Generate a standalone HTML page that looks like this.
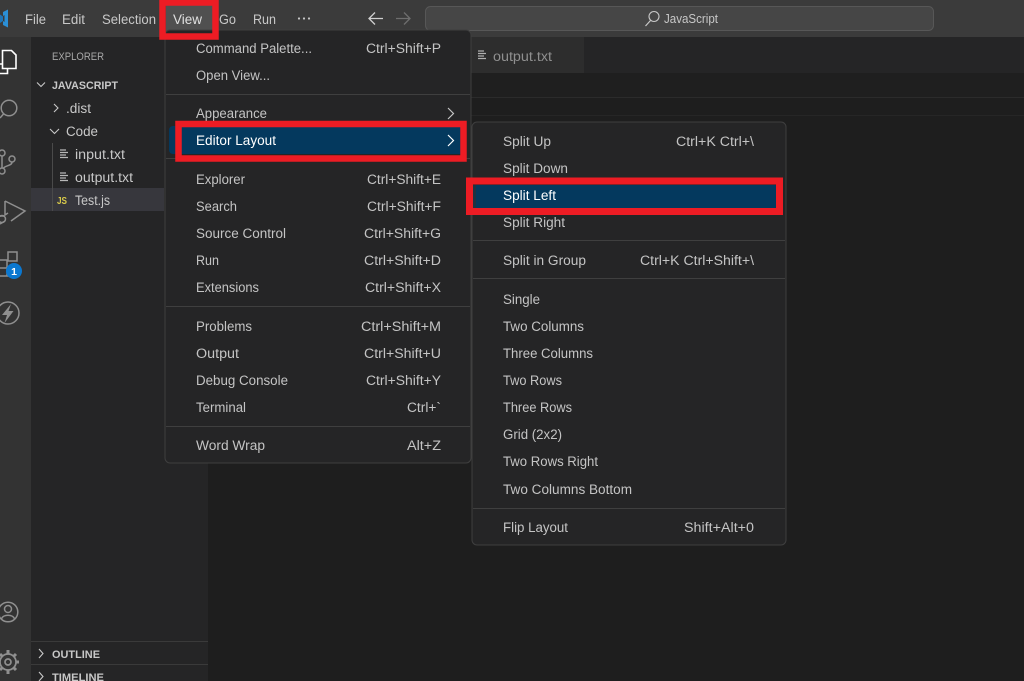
<!DOCTYPE html>
<html><head><meta charset="utf-8"><style>
html,body{margin:0;padding:0;background:#1e1e1e;overflow:hidden}
svg{display:block}
text{font-family:"Liberation Sans",sans-serif;font-size:13.5px;fill:#c8c8c8}
.m text{fill:#c4c4c4}
</style></head><body>
<svg width="1024" height="681" viewBox="0 0 1024 681" xmlns="http://www.w3.org/2000/svg">
<rect width="1024" height="681" fill="#1e1e1e"/>
<rect width="1024" height="37" fill="#3b3b3b"/>
<rect y="37" width="31" height="644" fill="#333333"/>
<rect x="31" y="37" width="177" height="644" fill="#252526"/>
<rect x="208" y="37" width="816" height="36" fill="#252526"/>
<rect x="452" y="37" width="132" height="36" fill="#2d2d2d"/>
<rect x="208" y="73" width="816" height="24" fill="#1f1f1f"/>
<rect x="208" y="97" width="816" height="1" fill="#2b2b2b"/>
<rect x="208" y="115" width="816" height="1" fill="#262626"/>

<path d="M3 12 L8 9.500 V27.500 L3 25 L3 21 L4.500 22 V15 L3 16 Z" fill="#2b8fd6"/><path d="M0 14.500 L3 16.500 V21 L0 23Z" fill="#1f75b8"/>
<text x="25" y="24" textLength="21" lengthAdjust="spacingAndGlyphs">File</text>
<text x="62" y="24" textLength="23" lengthAdjust="spacingAndGlyphs">Edit</text>
<text x="102" y="24" textLength="54" lengthAdjust="spacingAndGlyphs">Selection</text>
<rect x="166" y="5" width="47" height="28" fill="#505050"/>
<text x="173" y="24" textLength="29" lengthAdjust="spacingAndGlyphs" style="fill:#e0e0e0">View</text>
<text x="219" y="24" textLength="17" lengthAdjust="spacingAndGlyphs">Go</text>
<text x="253" y="24" textLength="23" lengthAdjust="spacingAndGlyphs">Run</text>
<g fill="#c8c8c8"><circle cx="299" cy="18.500" r="1.100"/><circle cx="304" cy="18.500" r="1.100"/><circle cx="309" cy="18.500" r="1.100"/></g>
<path d="M369 18.500H383M375 12.500L369 18.500L375 24.500" fill="none" stroke="#d0d0d0" stroke-width="1.300"/>
<path d="M396 18.500H410M404 12.500L410 18.500L404 24.500" fill="none" stroke="#6e6e6e" stroke-width="1.300"/>
<rect x="425.500" y="6.500" width="508" height="24" rx="5" fill="#464646" stroke="#575757"/>
<circle cx="654" cy="16.500" r="5" fill="none" stroke="#c8c8c8" stroke-width="1.100"/><path d="M650.500 20.500L645.500 26" stroke="#c8c8c8" stroke-width="1.200"/>
<text x="664" y="23" textLength="54" lengthAdjust="spacingAndGlyphs" style="font-size:12.500px">JavaScript</text>

<!-- activity icons -->
<g fill="none" stroke="#ffffff" stroke-width="1.600">
<path d="M2.500 50.500H11.500L16 55V68.500H2.500Z"/>
<path d="M0 64H2.500M0 73.500H7.500V68.500"/>
</g>
<g fill="none" stroke="#8f8f8f" stroke-width="1.500">
<circle cx="9" cy="108" r="7.800"/><path d="M3.500 114L0 118"/>
<circle cx="2" cy="153" r="3"/><circle cx="12" cy="159" r="3"/><circle cx="2" cy="171" r="3"/>
<path d="M2 156V168M12 162C12 166 6 165 3.500 168"/>
<path d="M5 201V215L8 213M5 201L25 211L11 221"/>
<path d="M0 216H4M0 224L5 221"/><circle cx="2" cy="219" r="3.500"/>
<rect x="8" y="252" width="9" height="9"/><path d="M0 260H7V276H-1M7 268H14V276H7M0 268H7"/>
<circle cx="8" cy="313" r="11"/>
<circle cx="8" cy="612" r="9.800"/><circle cx="8" cy="609" r="3.500"/><path d="M1.500 619C3 614 13 614 14.500 619"/>
</g>
<path d="M11 304L2 315H7L4.500 323L13.500 311H8.500Z" fill="#8f8f8f"/>
<circle cx="14" cy="271" r="8" fill="#0b78d0"/>
<text x="14" y="275" text-anchor="middle" style="font-size:10.500px;font-weight:bold;fill:#fff">1</text>
<g fill="none" stroke="#8f8f8f" stroke-width="1.700">
<circle cx="8" cy="662" r="3"/>
<circle cx="8" cy="662" r="8"/>
<path d="M8 650V654M8 670V674M-3 662H0M16 662H19M0 654L2.500 656.500M13.500 667.500L16 670M16 654L13.500 656.500M2.500 667.500L0 670" stroke-width="3"/>
</g>

<!-- sidebar -->
<rect x="31" y="188" width="133" height="23" fill="#37373d"/>
<rect x="52" y="143" width="1" height="68" fill="#4a4a4a"/>
<text x="52" y="60" textLength="52" lengthAdjust="spacingAndGlyphs" style="font-size:11px;fill:#a8a8a8">EXPLORER</text>
<path d="M37 82.500L41 86.500L45 82.500" fill="none" stroke="#c8c8c8" stroke-width="1.100"/>
<text x="52" y="89" textLength="66" lengthAdjust="spacingAndGlyphs" style="font-size:11px;font-weight:bold">JAVASCRIPT</text>
<path d="M54 104L58 108L54 112" fill="none" stroke="#c8c8c8" stroke-width="1.100"/>
<text x="66" y="113" textLength="25" lengthAdjust="spacingAndGlyphs">.dist</text>
<path d="M50 129L54.500 133.500L59 129" fill="none" stroke="#c8c8c8" stroke-width="1.100"/>
<text x="66" y="136" textLength="32" lengthAdjust="spacingAndGlyphs">Code</text>
<g stroke="#b8b8b8" stroke-width="1.200"><path d="M60 150H66M60 152.500H68M60 155H66M60 157.500H68"/><path d="M60 173H66M60 175.500H68M60 178H66M60 180.500H68"/></g>
<text x="75" y="159" textLength="50" lengthAdjust="spacingAndGlyphs">input.txt</text>
<text x="75" y="182" textLength="58" lengthAdjust="spacingAndGlyphs">output.txt</text>
<text x="57" y="204" textLength="10" lengthAdjust="spacingAndGlyphs" style="font-size:10px;font-weight:bold;fill:#d8c94a">JS</text>
<text x="75" y="205" textLength="35" lengthAdjust="spacingAndGlyphs">Test.js</text>
<rect x="31" y="641" width="177" height="1" fill="#3a3a3a"/>
<rect x="31" y="664" width="177" height="1" fill="#3a3a3a"/>
<path d="M39 649L43 653.500L39 658" fill="none" stroke="#c8c8c8" stroke-width="1.100"/>
<text x="52" y="658" textLength="48" lengthAdjust="spacingAndGlyphs" style="font-size:11px;font-weight:bold">OUTLINE</text>
<path d="M39 672L43 676.500L39 681" fill="none" stroke="#c8c8c8" stroke-width="1.100"/>
<text x="52" y="681" textLength="52" lengthAdjust="spacingAndGlyphs" style="font-size:11px;font-weight:bold">TIMELINE</text>

<!-- tab -->
<g stroke="#b0b0b0" stroke-width="1.200"><path d="M478 51H484M478 53.500H486M478 56H484M478 58.500H486"/></g>
<text x="493" y="61" textLength="59" lengthAdjust="spacingAndGlyphs" style="fill:#8f8f8f">output.txt</text>

<!-- view menu -->
<g class="m">
<rect x="165" y="30" width="306" height="433" rx="5" fill="#252526" stroke="#3f3f3f"/>
<g fill="#3f3f3f"><rect x="166" y="94" width="304" height="1"/><rect x="166" y="158" width="304" height="1"/><rect x="166" y="306" width="304" height="1"/><rect x="166" y="426" width="304" height="1"/></g>
<rect x="169" y="126" width="296" height="28" rx="4" fill="#04395e"/>
<text x="196" y="53" textLength="116" lengthAdjust="spacingAndGlyphs">Command Palette...</text>
<text x="196" y="80" textLength="74" lengthAdjust="spacingAndGlyphs">Open View...</text>
<text x="196" y="118" textLength="71" lengthAdjust="spacingAndGlyphs">Appearance</text>
<text x="196" y="145" textLength="80" lengthAdjust="spacingAndGlyphs" style="fill:#fff">Editor Layout</text>
<text x="196" y="184" textLength="49" lengthAdjust="spacingAndGlyphs">Explorer</text>
<text x="196" y="211" textLength="41" lengthAdjust="spacingAndGlyphs">Search</text>
<text x="196" y="238" textLength="90" lengthAdjust="spacingAndGlyphs">Source Control</text>
<text x="196" y="265" textLength="23" lengthAdjust="spacingAndGlyphs">Run</text>
<text x="196" y="292" textLength="63" lengthAdjust="spacingAndGlyphs">Extensions</text>
<text x="196" y="331" textLength="56" lengthAdjust="spacingAndGlyphs">Problems</text>
<text x="196" y="358" textLength="43" lengthAdjust="spacingAndGlyphs">Output</text>
<text x="196" y="385" textLength="92" lengthAdjust="spacingAndGlyphs">Debug Console</text>
<text x="196" y="412" textLength="50" lengthAdjust="spacingAndGlyphs">Terminal</text>
<text x="196" y="450" textLength="69" lengthAdjust="spacingAndGlyphs">Word Wrap</text>
<text x="366" y="53" textLength="75" lengthAdjust="spacingAndGlyphs">Ctrl+Shift+P</text>
<text x="367" y="184" textLength="74" lengthAdjust="spacingAndGlyphs">Ctrl+Shift+E</text>
<text x="367" y="211" textLength="74" lengthAdjust="spacingAndGlyphs">Ctrl+Shift+F</text>
<text x="364" y="238" textLength="77" lengthAdjust="spacingAndGlyphs">Ctrl+Shift+G</text>
<text x="364" y="265" textLength="77" lengthAdjust="spacingAndGlyphs">Ctrl+Shift+D</text>
<text x="365" y="292" textLength="76" lengthAdjust="spacingAndGlyphs">Ctrl+Shift+X</text>
<text x="361" y="331" textLength="80" lengthAdjust="spacingAndGlyphs">Ctrl+Shift+M</text>
<text x="364" y="358" textLength="77" lengthAdjust="spacingAndGlyphs">Ctrl+Shift+U</text>
<text x="366" y="385" textLength="75" lengthAdjust="spacingAndGlyphs">Ctrl+Shift+Y</text>
<text x="407" y="412" textLength="34" lengthAdjust="spacingAndGlyphs">Ctrl+`</text>
<text x="407" y="450" textLength="34" lengthAdjust="spacingAndGlyphs">Alt+Z</text>
<path d="M448 108L453.500 113.500L448 119" fill="none" stroke="#c4c4c4" stroke-width="1.200"/>
<path d="M448 135L453.500 140.500L448 146" fill="none" stroke="#fff" stroke-width="1.200"/>
</g>

<!-- submenu -->
<g class="m">
<rect x="472" y="122" width="314" height="423" rx="5" fill="#252526" stroke="#3f3f3f"/>
<g fill="#3f3f3f"><rect x="473" y="240" width="312" height="1"/><rect x="473" y="278" width="312" height="1"/><rect x="473" y="508" width="312" height="1"/></g>
<rect x="473" y="185" width="303" height="23" fill="#04395e"/>
<rect x="473" y="185" width="3" height="23" fill="#1f3342"/>
<text x="503" y="146" textLength="48" lengthAdjust="spacingAndGlyphs">Split Up</text>
<text x="503" y="173" textLength="65" lengthAdjust="spacingAndGlyphs">Split Down</text>
<text x="503" y="200" textLength="53" lengthAdjust="spacingAndGlyphs" style="fill:#fff">Split Left</text>
<text x="503" y="227" textLength="62" lengthAdjust="spacingAndGlyphs">Split Right</text>
<text x="503" y="265" textLength="83" lengthAdjust="spacingAndGlyphs">Split in Group</text>
<text x="503" y="304" textLength="37" lengthAdjust="spacingAndGlyphs">Single</text>
<text x="503" y="331" textLength="81" lengthAdjust="spacingAndGlyphs">Two Columns</text>
<text x="503" y="358" textLength="90" lengthAdjust="spacingAndGlyphs">Three Columns</text>
<text x="503" y="385" textLength="59" lengthAdjust="spacingAndGlyphs">Two Rows</text>
<text x="503" y="412" textLength="69" lengthAdjust="spacingAndGlyphs">Three Rows</text>
<text x="503" y="439" textLength="59" lengthAdjust="spacingAndGlyphs">Grid (2x2)</text>
<text x="503" y="466" textLength="95" lengthAdjust="spacingAndGlyphs">Two Rows Right</text>
<text x="503" y="494" textLength="129" lengthAdjust="spacingAndGlyphs">Two Columns Bottom</text>
<text x="503" y="532" textLength="65" lengthAdjust="spacingAndGlyphs">Flip Layout</text>
<text x="676" y="146" textLength="78" lengthAdjust="spacingAndGlyphs">Ctrl+K Ctrl+\</text>
<text x="640" y="265" textLength="114" lengthAdjust="spacingAndGlyphs">Ctrl+K Ctrl+Shift+\</text>
<text x="684" y="532" textLength="70" lengthAdjust="spacingAndGlyphs">Shift+Alt+0</text>
</g>

<!-- red annotation boxes -->
<g fill="none" stroke="#ed1c24">
<rect x="162.500" y="2.500" width="53" height="34" stroke-width="6.500"/>
<rect x="178.500" y="124" width="285" height="34.500" stroke-width="6.500"/>
<rect x="469.500" y="181" width="310" height="30.500" stroke-width="7"/>
</g>
</svg>
</body></html>
